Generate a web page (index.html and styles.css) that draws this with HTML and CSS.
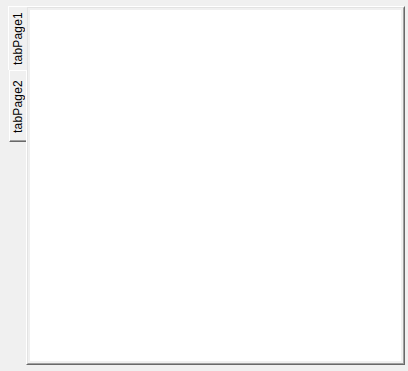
FILE: index.html
```html
<!DOCTYPE html>
<html lang="en">
<head>
    <meta charset="UTF-8">
    <title>TabControl</title>
    <link rel="stylesheet" href="styles.css">
</head>
<body>
    <div class="tab-control">
        <div class="tab-strip">
            <div class="tab selected"><span class="tab-label">tabPage1</span></div>
            <div class="tab"><span class="tab-label">tabPage2</span></div>
        </div>
        <div class="tab-panel">
            <div class="tab-panel-inner">
                <div class="tab-page"></div>
            </div>
        </div>
    </div>
</body>
</html>
```

FILE: styles.css
```css
html, body {
    margin: 0;
    height: 100%;
}

body {
    background: #f0f0f0;
    font-family: "Liberation Sans", Arial, sans-serif;
    font-size: 12px;
    color: #000;
}

.tab-control {
    display: flex;
    height: 100%;
    box-sizing: border-box;
    padding: 6px 3px 6px 8px;
}

.tab-strip {
    display: flex;
    flex-direction: column;
    width: 19px;
    margin-right: -1px;
    position: relative;
    z-index: 1;
}

.tab {
    box-sizing: border-box;
    width: 17px;
    height: 72px;
    margin-left: 1px;
    border-top: 1px solid #fff;
    border-left: 1px solid #fff;
    border-bottom: 1px solid #696969;
    box-shadow: inset 0 -1px 0 #a0a0a0;
    display: flex;
    justify-content: center;
    align-items: center;
    background: #f0f0f0;
}

.tab.selected {
    width: 19px;
    height: 64px;
    margin-left: 0;
    border-bottom: none;
    box-shadow: none;
}

.tab-label {
    writing-mode: vertical-rl;
    transform: rotate(180deg);
    line-height: 13px;
    white-space: nowrap;
    letter-spacing: 0.2px;
}

.tab-panel {
    flex: 1;
    border-top: 1px solid #fff;
    border-left: 1px solid #fff;
    border-right: 1px solid #696969;
    border-bottom: 1px solid #696969;
}

.tab-panel-inner {
    height: 100%;
    box-sizing: border-box;
    border-top: 1px solid #e3e3e3;
    border-left: 1px solid #e3e3e3;
    border-right: 1px solid #a0a0a0;
    border-bottom: 1px solid #a0a0a0;
    padding: 2px;
}

.tab-page {
    height: 100%;
    background: #fff;
}
```
